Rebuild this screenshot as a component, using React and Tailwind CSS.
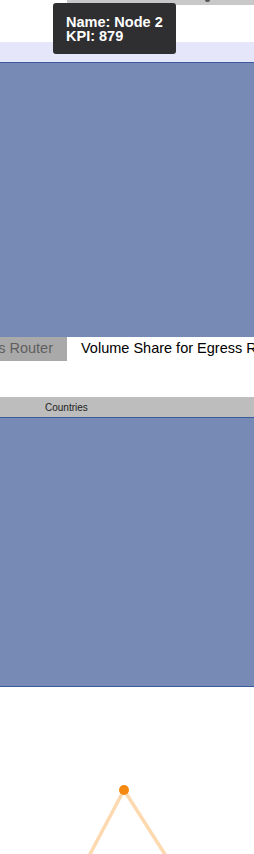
import React from 'react';

const App = () => {
  return (
    <div className="relative w-[254px] h-[854px] overflow-hidden bg-white font-['Liberation_Sans',Arial,sans-serif]">
      {/* top strip */}
      <div className="h-[42px] flex">
        <div className="w-[67px] shrink-0" />
        <div className="flex-1 h-[5px] bg-[#c8c8c8] relative">
          <div className="absolute left-[138px] top-[-2px] w-[5px] h-[4px] rounded-full bg-[#555]" />
        </div>
      </div>
      <div className="h-[20px] bg-[#e6e6fa]" />

      {/* first chart area */}
      <div className="h-[275px] bg-[#778ab6] border-t border-[#3a5a9c]" />

      {/* tab row */}
      <div className="flex h-[24px] items-center">
        <div className="w-[67px] shrink-0 h-full bg-[#a9a9a9] flex items-center justify-end pr-[14px] text-[14.5px] text-[#5f5f5f] whitespace-nowrap overflow-hidden">
          Ingress Router
        </div>
        <div className="pl-[14px] text-[14.5px] text-black whitespace-nowrap">
          Volume Share for Egress Router
        </div>
      </div>

      <div className="h-[36px]" />

      {/* countries header */}
      <div className="h-[20px] bg-[#bdbdbd] flex items-center pl-[45px] text-[10px] text-[#222]">
        Countries
      </div>
      <div className="h-[270px] bg-[#778ab6] border-t border-b border-[#3a5a9c]" />

      {/* tree fragment */}
      <svg className="absolute left-0 top-[780px]" width="254" height="74" viewBox="0 0 254 74">
        <line x1="124" y1="10" x2="89" y2="76" stroke="#fdd9b0" strokeWidth="3.5" />
        <line x1="124" y1="10" x2="166" y2="76" stroke="#fdd9b0" strokeWidth="3.5" />
        <circle cx="124" cy="10" r="5" fill="#f5890f" />
      </svg>

      {/* tooltip */}
      <div className="absolute left-[53px] top-[3px] w-[123px] h-[51px] rounded-[3px] bg-[#2f2f32] px-[13px] pt-[12px] text-white font-bold text-[14.5px] leading-[14px]">
        <div>Name: Node 2</div>
        <div>KPI: 879</div>
      </div>
    </div>
  );
};

export default App;
